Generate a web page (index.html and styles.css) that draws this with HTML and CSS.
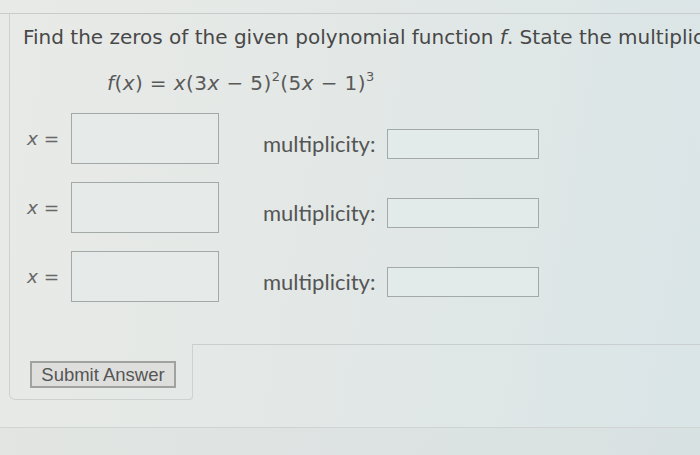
FILE: index.html
```html
<!DOCTYPE html>
<html>
<head>
<meta charset="utf-8">
<link rel="stylesheet" href="styles.css">
</head>
<body>
<div class="topbar"></div>
<div class="panel">
  <h1 class="prompt">Find the zeros of the given polynomial function <i>f</i>. State the multiplicity of each zero.</h1>
  <div class="formula"><i>f</i>(<i>x</i>) = <i>x</i>(3<i>x</i> − 5)<sup>2</sup>(5<i>x</i> − 1)<sup>3</sup></div>
  <div class="answers">
    <div class="row">
      <span class="xlabel"><i>x</i> =</span>
      <span class="zero-box"></span>
      <span class="mult"><span class="mlabel">multiplicity:</span><span class="mult-box"></span></span>
    </div>
    <div class="row">
      <span class="xlabel"><i>x</i> =</span>
      <span class="zero-box"></span>
      <span class="mult"><span class="mlabel">multiplicity:</span><span class="mult-box"></span></span>
    </div>
    <div class="row">
      <span class="xlabel"><i>x</i> =</span>
      <span class="zero-box"></span>
      <span class="mult"><span class="mlabel">multiplicity:</span><span class="mult-box"></span></span>
    </div>
  </div>
</div>
<div class="footer">
  <div class="submit-wrap"><button class="submit">Submit Answer</button></div>
  <div class="footer-fill"></div>
</div>
<div class="bottom-rule"></div>
</body>
</html>
```
FILE: styles.css
```css
html, body {
  margin: 0;
  padding: 0;
}
body {
  width: 700px;
  height: 455px;
  overflow: hidden;
  background: linear-gradient(100deg, #e8eae7 0%, #e3e8e6 45%, #dae5e7 100%);
  font-family: "DejaVu Sans", Verdana, sans-serif;
  color: #4d4d4d;
}
.topbar {
  height: 13px;
  border-bottom: 1px solid #c8cdcc;
}
.panel {
  margin-left: 9px;
  border-left: 1px solid #cdd2d1;
  padding-left: 13px;
  padding-top: 11px;
  padding-bottom: 33px;
}
.prompt {
  margin: 0;
  font-size: 20px;
  line-height: 24px;
  font-weight: normal;
  white-space: nowrap;
  overflow: hidden;
  color: #484848;
}
.prompt i { font-style: italic; }
.formula {
  margin: 22px 0 0 84px;
  font-size: 20px;
  line-height: 24px;
  letter-spacing: 0.4px;
  color: #595959;
  white-space: nowrap;
}
.formula sup {
  font-size: 13px;
  line-height: 0;
  vertical-align: 9px;
}
.answers {
  margin-top: 9px;
}
.row {
  height: 69px;
  display: flex;
  align-items: center;
}
.xlabel {
  width: 44px;
  padding-left: 4px;
  font-size: 18.5px;
  color: #686868;
}
.zero-box {
  width: 146px;
  height: 49px;
  border: 1px solid #a3a9a8;
  background: #e6ebe9;
}
.mult {
  display: flex;
  align-items: center;
  margin-left: 44px;
  margin-top: 10px;
}
.mlabel {
  width: 124px;
  font-family: Lato, "Open Sans", sans-serif;
  font-size: 22px;
  color: #555;
}
.mult-box {
  width: 150px;
  height: 28px;
  border: 1px solid #a3a9a8;
  background: #e3eaea;
}
.footer {
  display: flex;
  height: 56px;
}
.submit-wrap {
  width: 184px;
  border: 1px solid #cdd2d1;
  border-top: none;
  border-radius: 0 0 4px 6px;
  padding: 17px 0 0 20px;
  box-sizing: border-box;
  margin-left: 9px;
}
.submit {
  display: block;
  width: 146px;
  height: 27px;
  padding: 0;
  font-family: "Liberation Sans", Arial, sans-serif;
  font-size: 18.5px;
  color: #555;
  background: #dedfdd;
  border: 2px solid #a0a2a0;
  border-radius: 0;
}
.footer-fill {
  flex: 1;
  border-top: 1px solid #c9cfcf;
}
.bottom-rule {
  margin-top: 27px;
  border-top: 1px solid #cfd4d3;
  height: 40px;
  background: linear-gradient(100deg, #e2e5e2, #d8e1e2);
}
```
